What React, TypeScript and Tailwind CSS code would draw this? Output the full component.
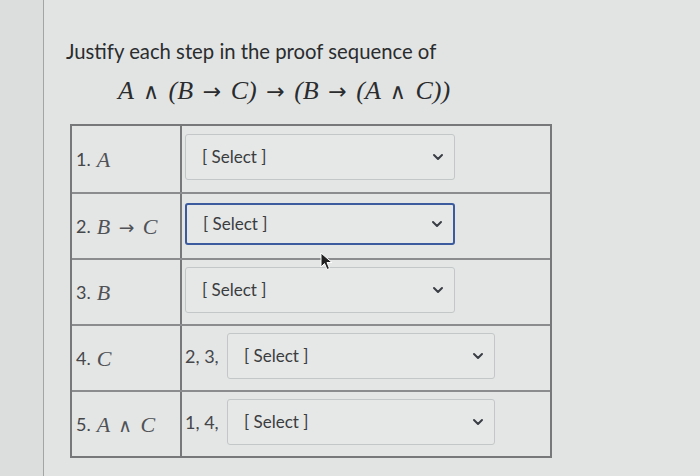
import { ChevronDown } from "lucide-react";

const serif = "font-['Liberation_Serif','DejaVu_Serif',serif] italic";
const sym = "not-italic font-['DejaVu_Sans',sans-serif] text-[0.85em] mx-[3px]";

type Step = {
  num: string;
  label: React.ReactNode;
  prefix?: string;
  focused?: boolean;
};

const steps: Step[] = [
  { num: "1.", label: "A" },
  { num: "2.", label: <>B <span className={sym}>→</span> C</>, focused: true },
  { num: "3.", label: "B" },
  { num: "4.", label: "C", prefix: "2, 3," },
  { num: "5.", label: <>A <span className={sym}>∧</span> C</>, prefix: "1, 4," },
];

function SelectBox({ focused, wide }: { focused?: boolean; wide?: boolean }) {
  return (
    <div
      className={
        "flex items-center justify-between pl-4 pr-2 rounded-[3px] bg-[#e6e8e8] " +
        (wide ? "w-[268px] " : "w-[270px] ") +
        (focused ? "border-2 border-[#3b5b9e] h-[42px]" : "border border-[#c4c7c8] h-[46px]")
      }
    >
      <span className="text-[17px] text-[#3a3c3e]">[ Select ]</span>
      <ChevronDown size={16} strokeWidth={3} className="text-[#3a3d44]" />
    </div>
  );
}

export default function App() {
  return (
    <div className="relative flex w-[700px] h-[476px] bg-[#e2e4e4] overflow-hidden font-['Lato','Liberation_Sans',sans-serif] text-[#2d2f31]">
      {/* left edge of the page */}
      <div className="w-[44px] shrink-0 bg-[#dcdedd] border-r border-[#a3a5a5]" />

      <div className="flex-1 pl-[22px] pt-[36px]">
        <h1 className="text-[20.3px] leading-[30px] text-[#2a2c2e]">Justify each step in the proof sequence of</h1>

        <div className={"mt-[8px] ml-[52px] text-[26px] leading-[34px] text-[#2a2c2e] " + serif}>
          A <span className={sym}>∧</span> (B <span className={sym}>→</span> C) <span className={sym}>→</span> (B <span className={sym}>→</span> (A <span className={sym}>∧</span> C))
        </div>

        <div className="mt-[16px] ml-[4px] w-[482px] border-2 border-[#76787a] bg-[#e4e6e6]">
          {steps.map((s, i) => (
            <div key={i} className={"flex h-[66px] " + (i > 0 ? "border-t-2 border-[#8a8c8e]" : "")}>
              <div className="w-[110px] shrink-0 flex items-center pl-[4px] border-r-2 border-[#76787a] text-[18px] text-[#45474a]">
                <span>{s.num}</span>
                <span className={"ml-[6px] text-[22px] text-[#505256] " + serif}>{s.label}</span>
              </div>
              <div className="flex items-center pl-[3px] pb-[4px]">
                {s.prefix && <span className="text-[18px] text-[#45474a] w-[42px]">{s.prefix}</span>}
                <SelectBox focused={s.focused} wide={!!s.prefix} />
              </div>
            </div>
          ))}
        </div>
      </div>

      {/* mouse pointer */}
      <svg className="absolute left-[320px] top-[252px]" width="14" height="20" viewBox="0 0 14 20">
        <path d="M1 1 L1 15 L4.5 11.5 L7 17.5 L9.5 16.5 L7 10.5 L12 10.5 Z" fill="#222" stroke="#fff" strokeWidth="1" />
      </svg>
    </div>
  );
}
